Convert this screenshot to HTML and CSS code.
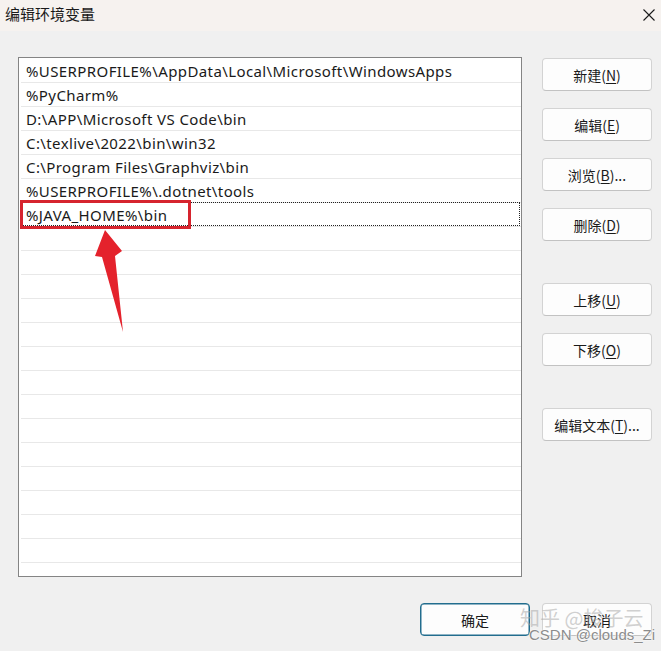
FILE: index.html
```html
<!DOCTYPE html>
<html lang="zh-CN">
<head>
<meta charset="utf-8">
<title>编辑环境变量</title>
<link rel="stylesheet" href="styles.css">
</head>
<body>
<div class="window">
  <div class="titlebar">
    <span class="title">编辑环境变量</span>
    <svg class="close" width="12" height="12" viewBox="0 0 12 12"><path d="M0.5 0.5 L11.5 11.5 M11.5 0.5 L0.5 11.5" stroke="#1a1a1a" stroke-width="1.1" fill="none"/></svg>
  </div>
  <div class="main">
    <div class="list">
      <div class="row">%USERPROFILE%\AppData\Local\Microsoft\WindowsApps</div>
      <div class="row">%PyCharm%</div>
      <div class="row">D:\APP\Microsoft VS Code\bin</div>
      <div class="row">C:\texlive\2022\bin\win32</div>
      <div class="row">C:\Program Files\Graphviz\bin</div>
      <div class="row">%USERPROFILE%\.dotnet\tools</div>
      <div class="row focused">%JAVA_HOME%\bin</div>
      <div class="row"></div>
      <div class="row"></div>
      <div class="row"></div>
      <div class="row"></div>
      <div class="row"></div>
      <div class="row"></div>
      <div class="row"></div>
      <div class="row"></div>
      <div class="row"></div>
      <div class="row"></div>
      <div class="row"></div>
      <div class="row"></div>
      <div class="row"></div>
      <div class="row"></div>
      <div class="row"></div>
    </div>
    <div class="side">
      <div class="group">
        <button class="btn">新建(<u>N</u>)</button>
        <button class="btn">编辑(<u>E</u>)</button>
        <button class="btn">浏览(<u>B</u>)...</button>
        <button class="btn">删除(<u>D</u>)</button>
      </div>
      <div class="group">
        <button class="btn">上移(<u>U</u>)</button>
        <button class="btn">下移(<u>O</u>)</button>
      </div>
      <div class="group">
        <button class="btn">编辑文本(<u>T</u>)...</button>
      </div>
    </div>
  </div>
  <div class="footer">
    <button class="btn default">确定</button>
    <button class="btn">取消</button>
  </div>
  <svg class="annot" width="661" height="651" viewBox="0 0 661 651">
    <rect x="21.5" y="201.5" width="168" height="26" fill="none" stroke="#d6242e" stroke-width="3"/>
    <polygon points="105,230 122,251 115,256 123,332 102,257 95,256" fill="#e4222c"/>
  </svg>
  <div class="wm">
    <span class="wm1">知乎 @梭子云</span>
    <span class="wm2">CSDN @clouds_Zi</span>
  </div>
</div>
</body>
</html>
```

FILE: styles.css
```css
html, body {
  margin: 0;
  padding: 0;
}
body {
  width: 661px;
  height: 651px;
  background: #f0f0f0;
  overflow: hidden;
  font-family: "Noto Sans", "Noto Sans CJK SC", sans-serif;
  color: #1a1a1a;
}
.window {
  position: relative;
  width: 661px;
  height: 651px;
  display: flex;
  flex-direction: column;
}
.titlebar {
  height: 31px;
  flex: none;
  background: #f6f2ef;
  display: flex;
  align-items: center;
  justify-content: space-between;
  padding: 0 6px 5px 5px;
  box-sizing: border-box;
}
.title {
  font-family: "Noto Sans CJK SC", sans-serif;
  font-size: 15px;
  color: #1a1a1a;
}
.close {
  margin-top: 3px;
}
.main {
  display: flex;
  padding: 26px 9px 0 18px;
}
.list {
  position: relative;
  width: 504px;
  height: 520px;
  box-sizing: border-box;
  border: 1px solid #848484;
  background: #ffffff;
  padding-top: 1px;
  overflow: hidden;
}
.row {
  position: relative;
  height: 24px;
  box-sizing: border-box;
  border-bottom: 1px solid #e8e8e8;
  margin-left: 2px;
  padding-left: 5px;
  font-size: 15px;
  letter-spacing: 0.4px;
  line-height: 25px;
  white-space: nowrap;
  color: #1a1a1a;
}
.row.focused::after {
  content: "";
  position: absolute;
  left: 0;
  right: 1px;
  top: -1px;
  bottom: 0;
  border: 1px dotted #222;
}
.side {
  margin-left: 20px;
  padding-top: 1px;
  display: flex;
  flex-direction: column;
  gap: 42px;
}
.group {
  display: flex;
  flex-direction: column;
  gap: 17px;
}
.btn {
  width: 110px;
  height: 33px;
  box-sizing: border-box;
  border: 1px solid #d3d3d3;
  border-bottom-color: #c2c2c2;
  border-radius: 4px;
  background: #fdfdfd;
  font-family: "Noto Sans CJK SC", sans-serif;
  font-size: 14px;
  color: #1a1a1a;
  padding: 0;
  margin: 0;
}
.btn u {
  text-decoration-thickness: 1px;
  text-underline-offset: 2px;
}
.footer {
  display: flex;
  justify-content: flex-end;
  gap: 12px;
  padding: 26px 9px 0 0;
}
.btn.default {
  border: 1px solid #226d8e;
  box-shadow: inset 0 0 0 0.5px #226d8e;
}
.annot {
  position: absolute;
  left: 0;
  top: 0;
  pointer-events: none;
}
.wm {
  position: absolute;
  left: 520px;
  top: 606px;
  pointer-events: none;
}
.wm1 {
  position: absolute;
  left: 0;
  top: 0;
  white-space: nowrap;
  font-family: "Noto Sans CJK SC", sans-serif;
  font-size: 20px;
  line-height: 24px;
  color: rgba(170, 170, 170, 0.55);
}
.wm2 {
  position: absolute;
  left: 9px;
  top: 20px;
  white-space: nowrap;
  font-family: "Liberation Sans", sans-serif;
  font-size: 15px;
  line-height: 18px;
  color: #8c8c8c;
  text-shadow: 0 0 2px #ffffff, 0 0 1px #ffffff;
}
```
